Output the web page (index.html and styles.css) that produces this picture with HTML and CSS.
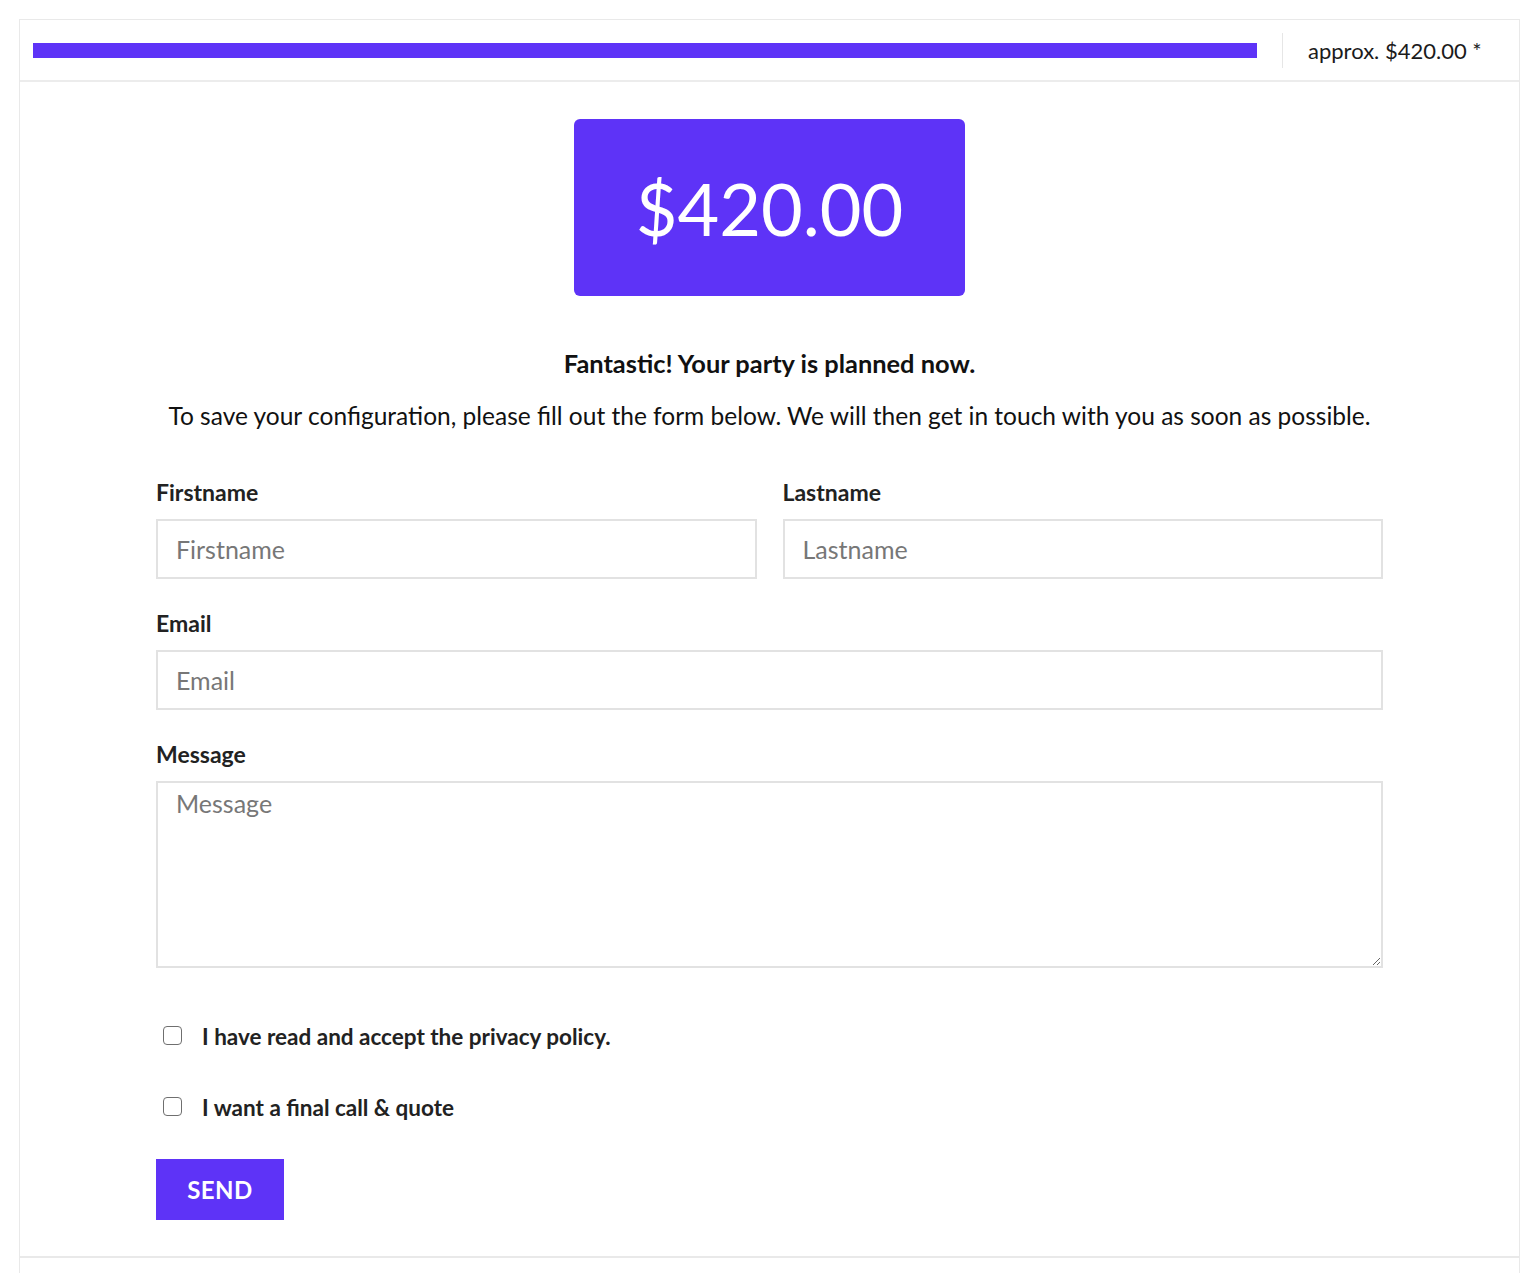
FILE: index.html
```html
<!DOCTYPE html>
<html lang="en">
<head>
<meta charset="utf-8">
<title>Party configurator</title>
<link rel="stylesheet" href="styles.css">
</head>
<body>
<div class="card">
  <header class="topbar">
    <div class="progress"><div class="progress-fill"></div></div>
    <div class="sep"></div>
    <div class="approx">approx. $420.00 *</div>
  </header>
  <main class="content">
    <div class="price">$420.00</div>
    <h2 class="title">Fantastic! Your party is planned now.</h2>
    <p class="intro">To save your configuration, please fill out the form below. We will then get in touch with you as soon as possible.</p>
    <form class="form">
      <div class="row two">
        <div class="field">
          <label class="label" for="fn">Firstname</label>
          <input class="input" id="fn" type="text" placeholder="Firstname">
        </div>
        <div class="field">
          <label class="label" for="ln">Lastname</label>
          <input class="input" id="ln" type="text" placeholder="Lastname">
        </div>
      </div>
      <div class="field">
        <label class="label" for="em">Email</label>
        <input class="input" id="em" type="email" placeholder="Email">
      </div>
      <div class="field">
        <label class="label" for="msg">Message</label>
        <textarea class="input textarea" id="msg" placeholder="Message"></textarea>
      </div>
      <label class="check first"><input type="checkbox" class="box"><span>I have read and accept the privacy policy.</span></label>
      <label class="check"><input type="checkbox" class="box"><span>I want a final call &amp; quote</span></label>
      <button type="button" class="send">SEND</button>
    </form>
  </main>
</div>
<div class="card next"></div>
</body>
</html>
```
FILE: styles.css
```css
* { box-sizing: border-box; }
html, body { margin: 0; padding: 0; background: #fff; }
body {
  font-family: Lato, "Noto Sans", sans-serif;
  color: #1b1b1b;
  padding: 19px 16px 0 19px;
}
.card {
  border: 1px solid #e9e9e9;
  background: #fff;
}
.card.next {
  border-bottom: none;
  height: 40px;
  border-top: 1px solid #e9e9e9;
  margin-top: 0;
}
.topbar {
  display: flex;
  align-items: center;
  height: 62px;
  padding: 0 0 0 13px;
  border-bottom: 2px solid #ececec;
}
.progress {
  flex: 1;
  height: 15px;
  background: #ececec;
}
.progress-fill {
  width: 100%;
  height: 100%;
  background: #5e33f7;
}
.sep {
  width: 1px;
  height: 35px;
  background: #e6e6e6;
  margin: 0 25px;
}
.approx {
  font-size: 22px;
  color: #1b1b1b;
  width: 211px;
  white-space: nowrap;
}
.content {
  padding: 37px 136px 36px;
  display: flex;
  flex-direction: column;
  align-items: center;
}
.price {
  width: 391px;
  height: 177px;
  background: #5e33f7;
  border-radius: 6px;
  color: #fff;
  font-size: 72px;
  display: flex;
  align-items: center;
  justify-content: center;
}
.title {
  margin: 51px 0 0;
  font-size: 25.4px;
  font-weight: 700;
  line-height: 33px;
  text-align: center;
  color: #111;
}
.intro {
  margin: 19px 0 0;
  font-size: 24.5px;
  line-height: 33px;
  text-align: center;
  color: #111;
}
.form {
  align-self: stretch;
  margin-top: 45px;
  display: flex;
  flex-direction: column;
}
.row.two {
  display: grid;
  grid-template-columns: 1fr 1fr;
  gap: 26px;
}
.field {
  display: flex;
  flex-direction: column;
  margin-bottom: 29px;
}
.label {
  font-size: 23px;
  font-weight: 700;
  line-height: 30px;
  color: #222;
  margin-bottom: 12px;
}
.input {
  height: 60px;
  border: 2px solid #e2e2e2;
  border-radius: 0;
  padding: 0 18px;
  font-family: Lato, "Noto Sans", sans-serif;
  font-size: 25px;
  color: #222;
  background: #fff;
  outline: none;
}
.input::placeholder { color: #777; }
.textarea {
  height: 187px;
  padding: 5px 18px;
  line-height: 30px;
  resize: vertical;
}
.check {
  display: flex;
  align-items: center;
  gap: 20px;
  font-size: 22.5px;
  font-weight: 700;
  line-height: 33px;
  color: #222;
  padding-left: 7px;
  height: 33px;
}
.check.first { margin-top: 23px; }
.check + .check { margin-top: 38px; }
.box {
  appearance: none;
  -webkit-appearance: none;
  width: 19px;
  height: 19px;
  margin: 0;
  border: 1.5px solid #6f6f6f;
  border-radius: 4px;
  background: #fff;
  position: relative;
  top: -1px;
}
.send {
  align-self: flex-start;
  margin-top: 35px;
  width: 128px;
  height: 61px;
  border: none;
  background: #5e33f7;
  color: #fff;
  font-family: Lato, "Noto Sans", sans-serif;
  font-size: 24px;
  font-weight: 700;
  letter-spacing: 0.5px;
  cursor: pointer;
}
```
